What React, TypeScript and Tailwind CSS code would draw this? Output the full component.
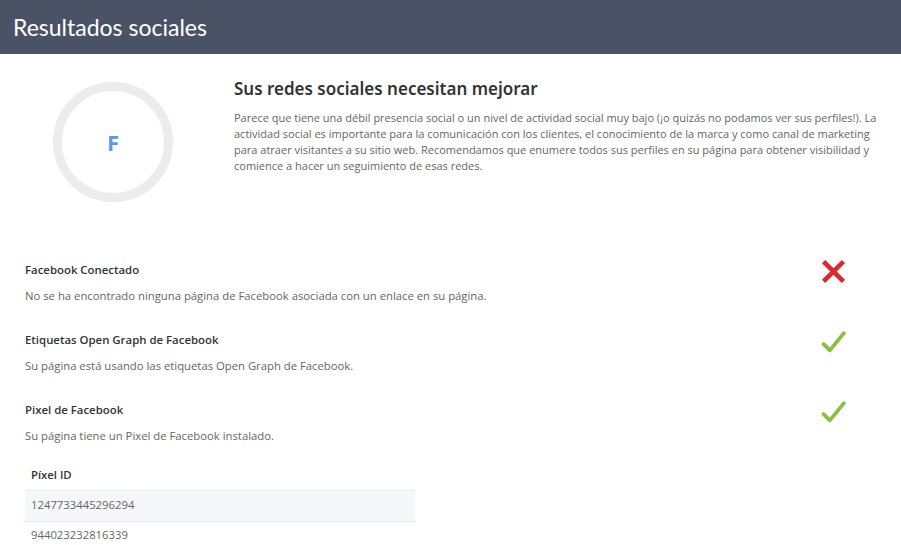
import React from 'react';

const body = { fontFamily: '"Open Sans", "Noto Sans", sans-serif' };

function CrossIcon() {
  return (
    <svg width="25" height="25" viewBox="0 0 24 24">
      <path d="M4 4 L20 20 M20 4 L4 20" stroke="#e0262f" strokeWidth="4.4" strokeLinecap="square" fill="none" />
    </svg>
  );
}

function CheckIcon() {
  return (
    <svg width="25" height="25" viewBox="0 0 24 24">
      <path d="M2.5 14.5 L8.5 20.5 L22 4" stroke="#8cbf3f" strokeWidth="3.6" strokeLinecap="round" strokeLinejoin="round" fill="none" />
    </svg>
  );
}

interface CheckRowProps {
  title: string;
  text: string;
  ok: boolean;
}

const CheckRow: React.FC<CheckRowProps> = ({ title, text, ok }) => (
  <div className="flex items-start justify-between">
    <div>
      <h4 className="text-[11.4px] font-semibold text-[#333] leading-[18px]">{title}</h4>
      <p className="mt-[8px] text-[11.3px] text-[#666] leading-[18px]">{text}</p>
    </div>
    <div className="mr-[30px] -mt-[2px]">{ok ? <CheckIcon /> : <CrossIcon />}</div>
  </div>
);

export default function App() {
  return (
    <div className="w-[901px] h-[545px] overflow-hidden bg-white" style={body}>
      <div className="h-[54px] bg-[#4a5366] flex items-center px-[13px]">
        <h1 className="text-[23px] text-white leading-none" style={{ fontFamily: 'Lato, "Open Sans", sans-serif' }}>
          Resultados sociales
        </h1>
      </div>

      <div className="flex pt-[22px]">
        <div className="w-[234px] flex justify-center">
          <div className="ml-[-8px] mt-[6px] w-[120px] h-[120px] rounded-full border-[9px] border-[#ececec] flex items-center justify-center">
            <span className="text-[22px] font-bold text-[#5b9ae8]">F</span>
          </div>
        </div>
        <div className="flex-1 pr-[8px]">
          <h2 className="text-[17px] font-semibold text-[#333] leading-[26px]" style={{ fontFamily: '"Noto Sans", "Open Sans", sans-serif' }}>
            Sus redes sociales necesitan mejorar
          </h2>
          <p className="mt-[8px] text-[11px] text-[#666] leading-[16px]">
            Parece que tiene una débil presencia social o un nivel de actividad social muy bajo (¡o quizás no podamos ver sus perfiles!). La actividad social es importante para la comunicación con los clientes, el conocimiento de la marca y como canal de marketing para atraer visitantes a su sitio web. Recomendamos que enumere todos sus perfiles en su página para obtener visibilidad y comience a hacer un seguimiento de esas redes.
          </p>
        </div>
      </div>

      <div className="px-[25px] mt-[59px] flex flex-col gap-[26px]">
        <CheckRow
          title="Facebook Conectado"
          text="No se ha encontrado ninguna página de Facebook asociada con un enlace en su página."
          ok={false}
        />
        <CheckRow
          title="Etiquetas Open Graph de Facebook"
          text="Su página está usando las etiquetas Open Graph de Facebook."
          ok={true}
        />
        <div>
          <CheckRow title="Pixel de Facebook" text="Su página tiene un Pixel de Facebook instalado." ok={true} />
          <table className="mt-[17px] w-[390px] text-[11.3px]">
            <thead>
              <tr>
                <th className="text-left font-semibold text-[#333] px-[6px] h-[28px]">Píxel ID</th>
              </tr>
            </thead>
            <tbody>
              <tr className="bg-[#f5f7fa] border-t border-[#e9ecef]">
                <td className="px-[6px] h-[31px] text-[#666]">1247733445296294</td>
              </tr>
              <tr className="border-t border-[#e9ecef]">
                <td className="px-[6px] h-[29px] text-[#666]">944023232816339</td>
              </tr>
            </tbody>
          </table>
        </div>
      </div>
    </div>
  );
}
